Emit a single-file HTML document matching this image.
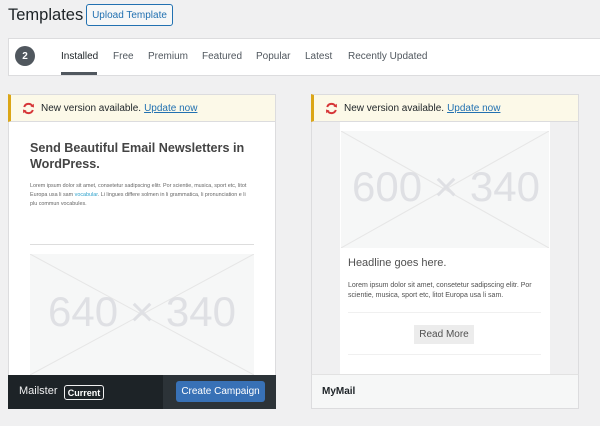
<!DOCTYPE html>
<html><head><style>
*{margin:0;padding:0;box-sizing:border-box}
body{width:600px;height:426px;background:#f0f0f1;font-family:"Liberation Sans",sans-serif;position:relative;overflow:hidden;color:#1d2327}
.a{position:absolute}
.c{display:flex;align-items:center;justify-content:center}
.tab{position:absolute;top:51px;font-size:10px;color:#50575e}
.notice{position:absolute;height:28px;background:#fcf9e8;border:1px solid #dcdcde;border-left:3px solid #dba617;font-size:10px;color:#1d2327;padding:0 0 0 30px;display:flex;align-items:center}
.notice a{color:#2271b1;text-decoration:underline;margin-left:3px}
.ico{position:absolute;left:11px;top:7px}
.ph{position:absolute;background:#f6f7f7;overflow:hidden}
.ph span{position:absolute;width:100%;text-align:center;color:#dfe0e4;font-size:42px}
</style></head><body>
<div class="a" style="left:8px;top:6px;font-size:16.5px">Templates</div>
<div class="a c" style="left:86px;top:4px;width:87px;height:22px;border:1px solid #2271b1;border-radius:3px;background:#f6f7f7;color:#2271b1;font-size:10px">Upload Template</div>
<div class="a" style="left:8px;top:38px;width:600px;height:38px;background:#fff;border:1px solid #dcdcde"></div>
<div class="a c" style="left:15px;top:46px;width:20px;height:20px;border-radius:50%;background:#50575e;color:#fff;font-size:10px;font-weight:bold">2</div>
<div class="tab" style="left:61px;color:#1d2327">Installed</div>
<div class="a" style="left:61px;top:72px;width:36px;height:3px;background:#50575e"></div>
<div class="tab" style="left:113px">Free</div>
<div class="tab" style="left:148px">Premium</div>
<div class="tab" style="left:202px">Featured</div>
<div class="tab" style="left:256px">Popular</div>
<div class="tab" style="left:305px">Latest</div>
<div class="tab" style="left:348px">Recently Updated</div>

<!-- card 1 -->
<div class="a" style="left:8px;top:94px;width:268px;height:315px;background:#fff;border:1px solid #dcdcde"></div>
<div class="notice" style="left:8px;top:94px;width:268px"><svg class="ico" width="13" height="13" viewBox="0 0 13 13"><path d="M2.2 5A4.5 4.5 0 0 1 10.3 4" fill="none" stroke="#d63638" stroke-width="2"/><path d="M10.8 8A4.5 4.5 0 0 1 2.7 9" fill="none" stroke="#d63638" stroke-width="2"/><path d="M8.5 4.5L12 5.5L11.8 1.8Z" fill="#d63638"/><path d="M4.5 8.5L1 7.5L1.2 11.2Z" fill="#d63638"/></svg>New version available. <a>Update now</a></div>
<div class="a" style="left:30px;top:140px;width:230px;font-size:12.6px;font-weight:bold;color:#444;line-height:16px">Send Beautiful Email Newsletters in WordPress.</div>
<div class="a" style="left:30px;top:182px;width:220px;font-size:5.4px;color:#666;line-height:9px">Lorem ipsum dolor sit amet, consetetur sadipscing elitr. Por scientie, musica, sport etc, litot Europa usa li sam <span style="color:#2ea2cc">vocabular</span>. Li lingues differe solmen in li grammatica, li pronunciation e li plu commun vocabules.</div>
<div class="a" style="left:30px;top:244px;width:224px;height:1px;background:#ddd"></div>
<div class="ph" style="left:30px;top:254px;width:224px;height:121px"><svg class="a" width="224" height="121" style="left:0;top:0"><line x1="0" y1="0" x2="224" y2="121" stroke="#e6e6e6"/><line x1="224" y1="0" x2="0" y2="121" stroke="#e6e6e6"/></svg><span style="top:34px">640 × 340</span></div>
<div class="a" style="left:8px;top:375px;width:268px;height:34px;background:#1d2327"></div>
<div class="a" style="left:163px;top:375px;width:113px;height:34px;background:#2c3338"></div>
<div class="a" style="left:19px;top:385px;font-size:11px;color:#f0f0f1">Mailster</div>
<div class="a c" style="left:64px;top:385px;width:40px;height:15px;border:1px solid #f0f0f1;border-radius:3px;color:#fff;font-size:9px;font-weight:bold">Current</div>
<div class="a c" style="left:176px;top:381px;width:89px;height:21px;background:#3871b6;border-radius:3px;color:#fff;font-size:10px">Create Campaign</div>

<!-- card 2 -->
<div class="a" style="left:311px;top:94px;width:268px;height:315px;background:#f0f0f1;border:1px solid #dcdcde"></div>
<div class="a" style="left:340px;top:122px;width:210px;height:253px;background:#fff"></div>
<div class="notice" style="left:311px;top:94px;width:268px"><svg class="ico" width="13" height="13" viewBox="0 0 13 13"><path d="M2.2 5A4.5 4.5 0 0 1 10.3 4" fill="none" stroke="#d63638" stroke-width="2"/><path d="M10.8 8A4.5 4.5 0 0 1 2.7 9" fill="none" stroke="#d63638" stroke-width="2"/><path d="M8.5 4.5L12 5.5L11.8 1.8Z" fill="#d63638"/><path d="M4.5 8.5L1 7.5L1.2 11.2Z" fill="#d63638"/></svg>New version available. <a>Update now</a></div>
<div class="ph" style="left:341px;top:131px;width:208px;height:117px"><svg class="a" width="208" height="117" style="left:0;top:0"><line x1="0" y1="0" x2="208" y2="117" stroke="#e6e6e6"/><line x1="208" y1="0" x2="0" y2="117" stroke="#e6e6e6"/></svg><span style="top:32px;left:1px">600 × 340</span></div>
<div class="a" style="left:348px;top:257px;font-size:11px;color:#505050">Headline goes here.</div>
<div class="a" style="left:348px;top:281px;width:200px;font-size:7px;color:#505050;line-height:10px">Lorem ipsum dolor sit amet, consetetur sadipscing elitr. Por scientie, musica, sport etc, litot Europa usa li sam.</div>
<div class="a" style="left:348px;top:312px;width:193px;height:1px;background:#f0f0f0"></div>
<div class="a c" style="left:414px;top:325px;width:60px;height:19px;background:#ececec;font-size:10px;color:#505050">Read More</div>
<div class="a" style="left:348px;top:354px;width:193px;height:1px;background:#f0f0f0"></div>
<div class="a" style="left:311px;top:374px;width:268px;height:35px;background:#f6f7f7;border:1px solid #dcdcde;border-top:1px solid #e2e2e2"></div>
<div class="a" style="left:322px;top:386px;font-size:10px;font-weight:bold;color:#1d2327">MyMail</div>
</body></html>
